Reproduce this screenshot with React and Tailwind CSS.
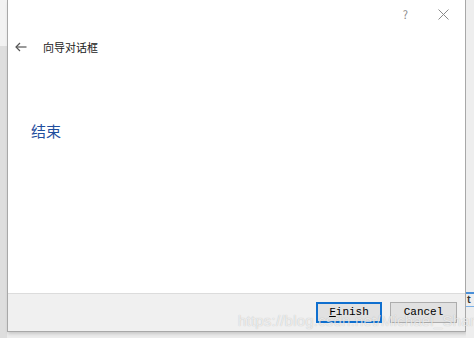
import React from 'react';

const ui = { fontFamily: '"Noto Sans CJK SC", "Microsoft YaHei", sans-serif' };
const mono = { fontFamily: '"Liberation Mono", "DejaVu Sans Mono", monospace' };

function BackArrow() {
  return (
    <svg width="12" height="10" viewBox="0 0 12 10" fill="none" stroke="#555" strokeWidth="1.2">
      <path d="M11.5 5H1" />
      <path d="M5 1L1 5l4 4" />
    </svg>
  );
}

function CloseIcon() {
  return (
    <svg width="11" height="11" viewBox="0 0 11 11" stroke="#8a8a8a" strokeWidth="1">
      <path d="M0.5 0.5l10 10M10.5 0.5l-10 10" />
    </svg>
  );
}

export default function App() {
  return (
    <div className="relative flex w-[474px] h-[338px] overflow-hidden bg-[#ececec]" style={ui}>
      {/* left strip of the window behind */}
      <div className="w-[7px] shrink-0 flex flex-col">
        <div className="h-[46px] bg-[#f2f2f2]" />
        <div className="flex-1 bg-[#dedede]" />
      </div>

      {/* the wizard dialog */}
      <div className="w-[459px] h-[332px] shrink-0 flex flex-col bg-white border-l border-r border-b border-[#a8a8a8] shadow-[1px_2px_3px_rgba(0,0,0,0.15)]">
        <div className="h-[28px] flex items-center justify-end pr-[16px] gap-[30px]">
          <span className="text-[11px] text-[#8a8a8a] leading-none">?</span>
          <CloseIcon />
        </div>
        <div className="h-[40px] flex items-center pl-[7px] gap-[16px] -mt-[1px]">
          <BackArrow />
          <span className="text-[11px] text-[#222]">向导对话框</span>
        </div>
        <div className="flex-1 pl-[23px] pt-[51px]">
          <span className="text-[15px] text-[#1f4e9e]">结束</span>
        </div>
        <div className="h-[38px] bg-[#f0f0f0] border-t border-[#dcdcdc] flex items-center justify-end gap-[8px] pr-[8px] pb-[1px]">
          <button
            className="w-[66px] h-[21px] bg-[#e1e1e1] border-2 border-[#0f6fcf] text-[11px] text-black leading-none"
            style={mono}
          >
            <span className="underline">F</span>inish
          </button>
          <button
            className="w-[67px] h-[21px] bg-[#e1e1e1] border border-[#adadad] text-[11px] text-black leading-none"
            style={mono}
          >
            Cancel
          </button>
        </div>
      </div>

      {/* right strip of the window behind */}
      <div className="flex-1 flex flex-col bg-[#eeeeee]">
        <div className="h-[292px]" />
        <div className="h-[2px] bg-[#4a8fd8]" />
        <div className="h-[12px] flex items-center pl-[1px] text-[9px] font-bold text-[#333]">t</div>
        <div className="h-[1px] bg-[#7ab0e6]" />
      </div>

      {/* watermark */}
      <div
        className="absolute left-[238px] top-[310px] text-[15px] text-white/70 whitespace-nowrap tracking-[0.2px]"
        style={{ fontFamily: '"Liberation Sans", Arial, sans-serif', textShadow: '0 0 1px rgba(0,0,0,0.25)' }}
      >
        https://blog.csdn.net/Michael_Shan
      </div>
    </div>
  );
}
